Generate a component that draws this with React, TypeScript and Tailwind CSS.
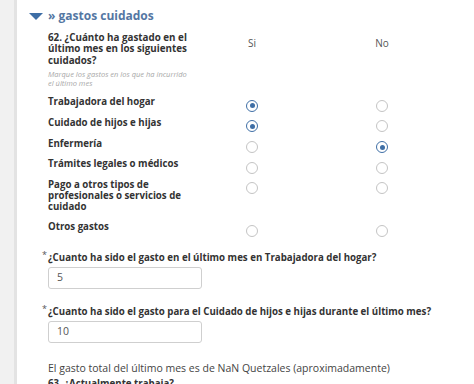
import React from "react";

type Row = { label: string; value: "si" | "no" | null };

const rows: Row[] = [
  { label: "Trabajadora del hogar", value: "si" },
  { label: "Cuidado de hijos e hijas", value: "si" },
  { label: "Enfermería", value: "no" },
  { label: "Trámites legales o médicos", value: null },
  { label: "Pago a otros tipos de profesionales o servicios de cuidado", value: null },
  { label: "Otros gastos", value: null },
];

function Radio({ checked }: { checked: boolean }) {
  return (
    <span
      className={`flex h-[12px] w-[12px] items-center justify-center rounded-full border ${
        checked ? "border-[#3f6fa6] border-[1.5px]" : "border-[#c4c4c4]"
      }`}
    >
      {checked && <span className="h-[5px] w-[5px] rounded-full bg-[#3f6fa6]" />}
    </span>
  );
}

function Amount({ question, value }: { question: string; value: string }) {
  return (
    <div>
      <div className="relative text-[9.7px] font-bold leading-[13px] text-[#333]">
        <span className="absolute -left-[6px] -top-[3px] text-[9px] font-normal text-[#555]">*</span>
        {question}
      </div>
      <div className="mt-[3px] flex h-[22px] w-[154px] items-center rounded-[3px] border border-[#cfcfcf] px-[8px] text-[10.5px] text-[#555]">
        {value}
      </div>
    </div>
  );
}

export default function App() {
  return (
    <div
      className="flex h-[384px] overflow-hidden bg-white"
      style={{ fontFamily: '"Open Sans", "Liberation Sans", sans-serif' }}
    >
      <div className="w-[14px] shrink-0 bg-[#f1f1f1]" />
      <div className="w-[3px] shrink-0 bg-[#e3e3e3]" />
      <div className="flex-1">
        <div className="ml-[12px] mt-[9px] flex h-[14px] items-center gap-[5px]">
          <svg width="14" height="7" viewBox="0 0 14 7">
            <polygon points="0,0 14,0 7,7" fill="#3e6ea6" />
          </svg>
          <span className="text-[12px] font-bold text-[#5477a3]">» gastos cuidados</span>
        </div>

        <div className="ml-[31px] mt-[9px] grid grid-cols-[170px_68px_192px]">
          <div className="pr-[20px]">
            <div className="text-[9.8px] font-bold leading-[11.3px] text-[#333]">
              62. ¿Cuánto ha gastado en el último mes en los siguientes cuidados?
            </div>
            <div className="mt-[4px] whitespace-nowrap text-[7.5px] italic leading-[9.5px] text-[#a8a8a8]">
              Marque los gastos en los que ha incurrido
              <br />
              el último mes
            </div>
          </div>
          <div className="pt-[4px] text-center text-[10px] text-[#555]">Si</div>
          <div className="pt-[4px] text-center text-[10px] text-[#555]">No</div>

          {rows.map((r, i) => (
            <React.Fragment key={r.label}>
              <div
                className={`${i === 0 ? "pt-[7.5px]" : "pt-[4.8px]"} pb-[4.8px] pr-[20px] text-[9.7px] font-bold leading-[11px] text-[#333]`}
              >
                {r.label}
              </div>
              <div className={`flex justify-center ${i === 0 ? "pt-[11px]" : "pt-[8.3px]"}`}>
                <Radio checked={r.value === "si"} />
              </div>
              <div className={`flex justify-center ${i === 0 ? "pt-[11px]" : "pt-[8.3px]"}`}>
                <Radio checked={r.value === "no"} />
              </div>
            </React.Fragment>
          ))}
        </div>

        <div className="ml-[31px] mt-[14px] flex flex-col gap-[16px]">
          <Amount
            question="¿Cuanto ha sido el gasto en el último mes en Trabajadora del hogar?"
            value="5"
          />
          <Amount
            question="¿Cuanto ha sido el gasto para el Cuidado de hijos e hijas durante el último mes?"
            value="10"
          />
        </div>

        <div className="ml-[31px] mt-[19px] text-[10.5px] leading-[13px] text-[#444]">
          El gasto total del último mes es de NaN Quetzales (aproximadamente)
        </div>
        <div className="ml-[31px] mt-[2px] text-[9.7px] font-bold leading-[13px] text-[#333]">
          63. ¿Actualmente trabaja?
        </div>
      </div>
    </div>
  );
}
